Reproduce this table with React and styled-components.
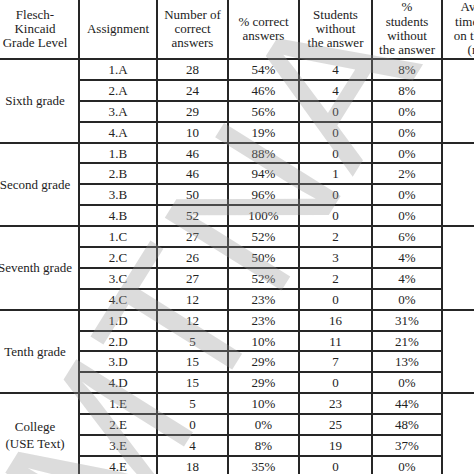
import React from "react";
import styled, { createGlobalStyle } from "styled-components";

const Global = createGlobalStyle`
  html, body {
    margin: 0;
    padding: 0;
    background: #fff;
    overflow: hidden;
  }
  body {
    font-family: "Liberation Serif", "Times New Roman", serif;
    color: #222;
  }
`;

const groups = [
  {
    grade: ["Sixth grade"],
    rows: [
      ["1.A", "28", "54%", "4", "8%"],
      ["2.A", "24", "46%", "4", "8%"],
      ["3.A", "29", "56%", "0", "0%"],
      ["4.A", "10", "19%", "0", "0%"],
    ],
  },
  {
    grade: ["Second grade"],
    rows: [
      ["1.B", "46", "88%", "0", "0%"],
      ["2.B", "46", "94%", "1", "2%"],
      ["3.B", "50", "96%", "0", "0%"],
      ["4.B", "52", "100%", "0", "0%"],
    ],
  },
  {
    grade: ["Seventh grade"],
    rows: [
      ["1.C", "27", "52%", "2", "6%"],
      ["2.C", "26", "50%", "3", "4%"],
      ["3.C", "27", "52%", "2", "4%"],
      ["4.C", "12", "23%", "0", "0%"],
    ],
  },
  {
    grade: ["Tenth grade"],
    rows: [
      ["1.D", "12", "23%", "16", "31%"],
      ["2.D", "5", "10%", "11", "21%"],
      ["3.D", "15", "29%", "7", "13%"],
      ["4.D", "15", "29%", "0", "0%"],
    ],
  },
  {
    grade: ["College", "(USE Text)"],
    rows: [
      ["1.E", "5", "10%", "23", "44%"],
      ["2.E", "0", "0%", "25", "48%"],
      ["3.E", "4", "8%", "19", "37%"],
      ["4.E", "18", "35%", "0", "0%"],
    ],
  },
];

const headers = [
  ["Flesch-", "Kincaid", "Grade Level"],
  ["Assignment"],
  ["Number of", "correct", "answers"],
  ["% correct", "answers"],
  ["Students", "without", "the answer"],
  ["%", "students", "without", "the answer"],
  ["Average", "time spent", "on the task", "(min)"],
];

export default function App() {
  return (
    <>
      <Global />
      <Page>
        <Sheet>
          {headers.map((lines, i) => (
            <HeadCell key={i} $last={i === headers.length - 1}>
              {lines.map((l, j) => (
                <Line key={j}>{l}</Line>
              ))}
            </HeadCell>
          ))}

          {groups.map((g, gi) => (
            <React.Fragment key={gi}>
              <GradeCell $start={gi * 4 + 2}>
                {g.grade.map((l, j) => (
                  <Line key={j}>{l}</Line>
                ))}
              </GradeCell>
              {g.rows.map((r, ri) =>
                r.map((v, ci) => (
                  <DataCell key={ri + "-" + ci} style={{ gridRow: gi * 4 + 2 + ri }}>
                    {v}
                  </DataCell>
                ))
              )}
              <NoteCell $start={gi * 4 + 2} />
            </React.Fragment>
          ))}
        </Sheet>
        <Watermark>MTNA</Watermark>
      </Page>
    </>
  );
}

const Page = styled.div`
  position: relative;
  width: 474px;
  height: 474px;
  overflow: hidden;
`;

const Sheet = styled.div`
  display: grid;
  grid-template-columns: 88px 78px 71px 71px 73px 70px 78px;
  grid-template-rows: 60px repeat(20, 20.9px);
  margin-left: -8px;
  width: 529px;
  font-size: 13px;
`;

const Cell = styled.div`
  box-sizing: border-box;
  display: flex;
  flex-direction: column;
  align-items: center;
  justify-content: center;
  text-align: center;
  border-right: 2px solid #262626;
  border-bottom: 2px solid #262626;
  white-space: nowrap;
`;

const HeadCell = styled(Cell)`
  line-height: 14.3px;
  border-right-width: ${(p) => (p.$last ? "0" : "2px")};
`;

const Line = styled.span`
  display: block;
`;

const GradeCell = styled(Cell)`
  grid-column: 1;
  grid-row: ${(p) => p.$start} / span 4;
  line-height: 17px;
`;

const DataCell = styled(Cell)`
  line-height: 1;
`;

const NoteCell = styled(Cell)`
  grid-column: 7;
  grid-row: ${(p) => p.$start} / span 4;
  border-right: 0;
`;

const Watermark = styled.div`
  position: absolute;
  left: -30px;
  top: 470px;
  font-family: "Liberation Sans", Arial, sans-serif;
  font-size: 200px;
  line-height: 1;
  letter-spacing: 6px;
  color: rgba(150, 150, 150, 0.33);
  transform: rotate(-58deg);
  transform-origin: left top;
  pointer-events: none;
  white-space: nowrap;
`;
